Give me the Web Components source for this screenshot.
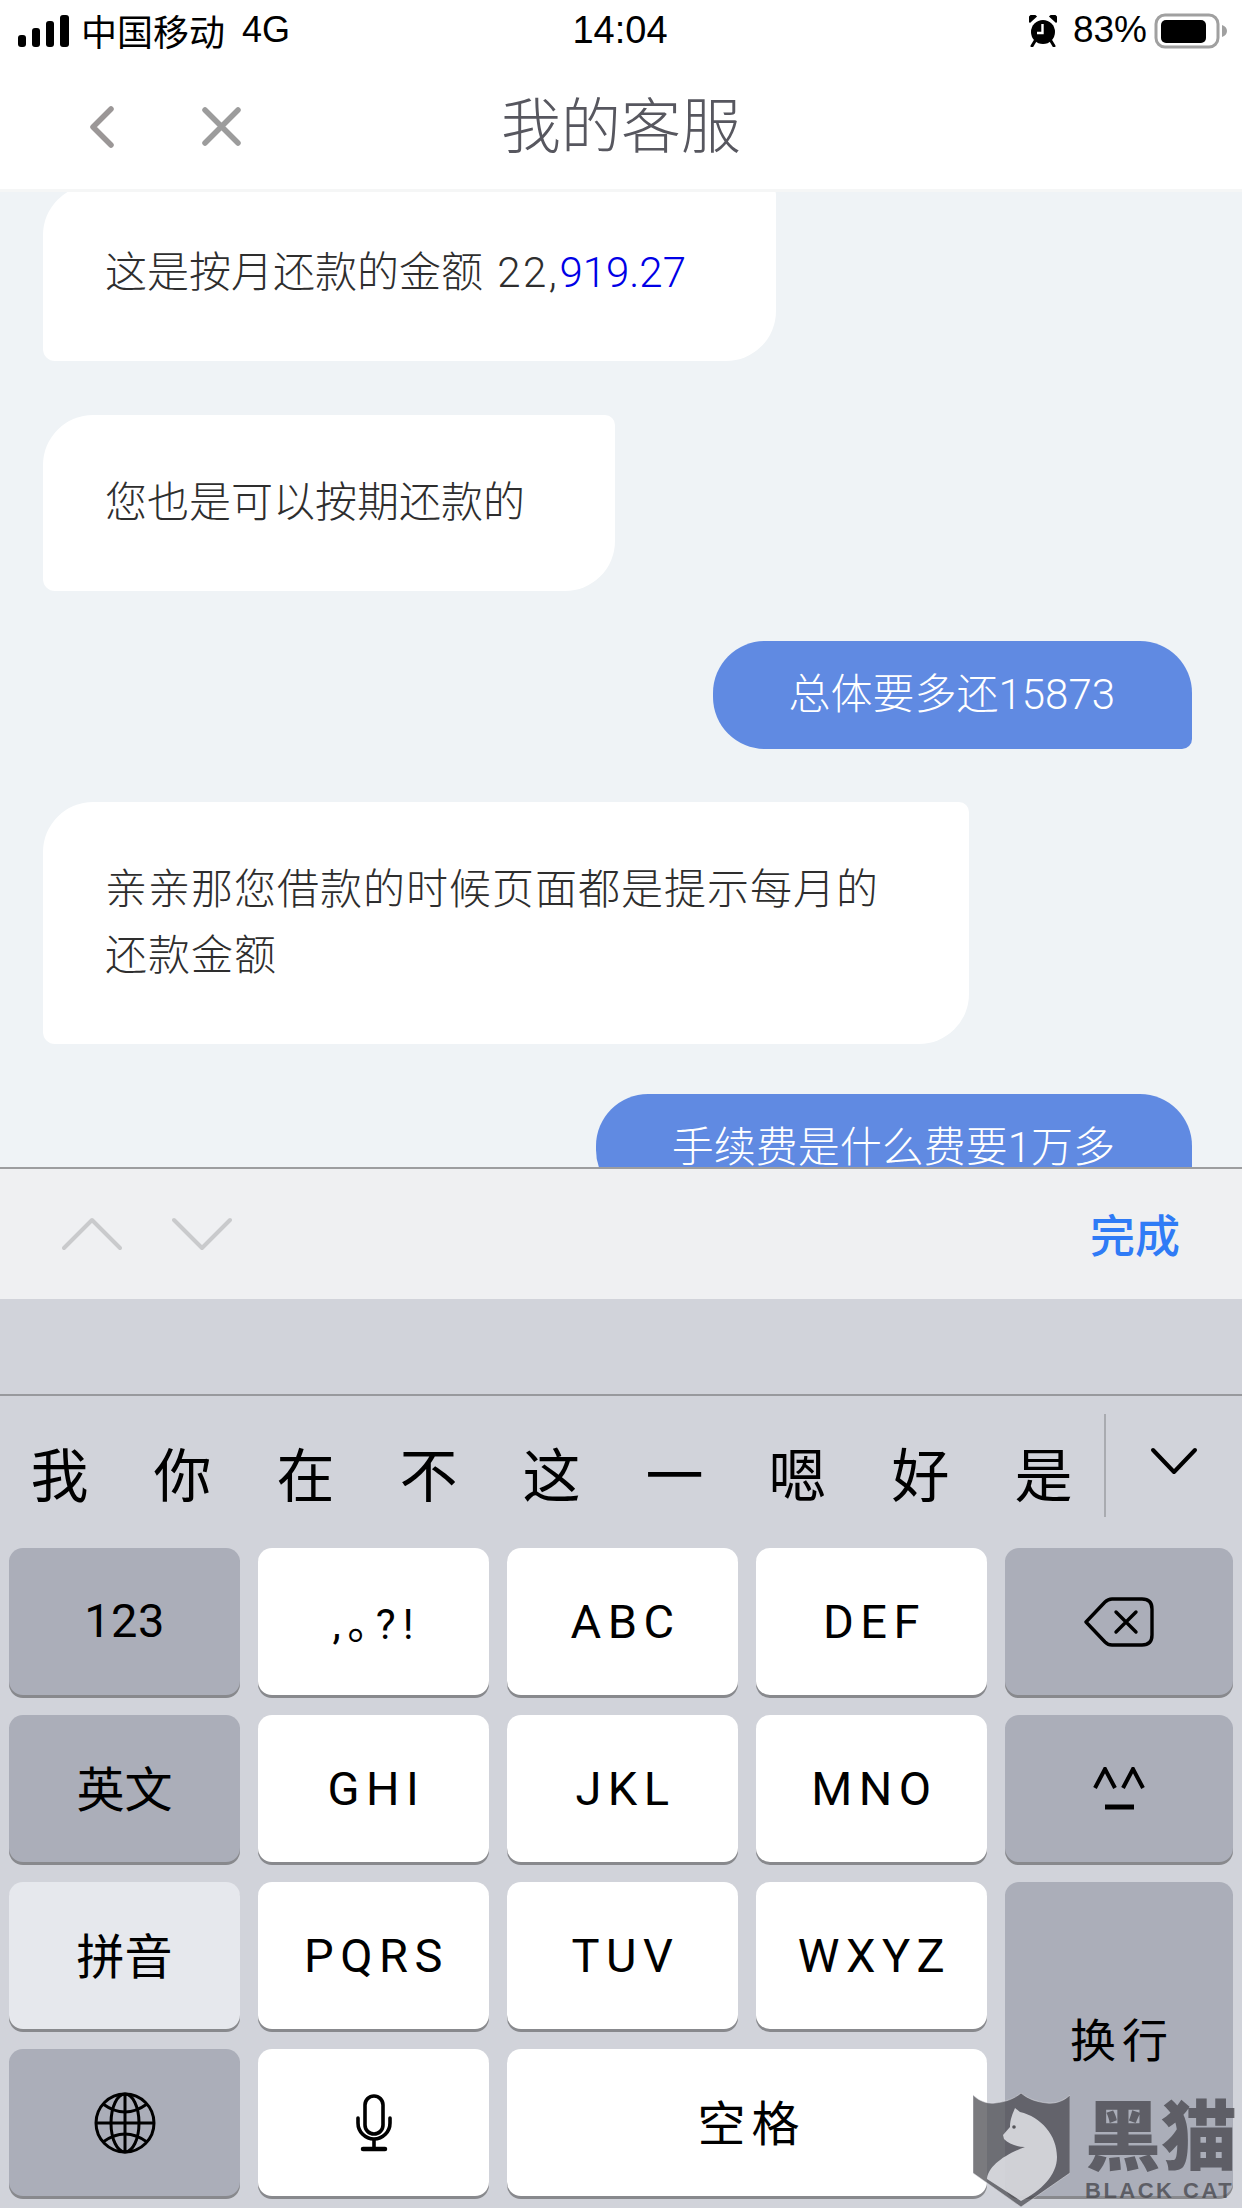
<!DOCTYPE html>
<html lang="zh">
<head>
<meta charset="utf-8">
<title>我的客服</title>
<style>
  html, body { margin: 0; padding: 0; }
  body {
    width: 1242px;
    height: 2208px;
    overflow: hidden;
    position: relative;
    background: #d1d3da;
    font-family: "Liberation Sans", "Noto Sans CJK SC", sans-serif;
    display: flex;
    flex-direction: column;
  }
</style>
</head>
<body>
  <status-bar></status-bar>
  <nav-bar>我的客服</nav-bar>
  <chat-view>
    <chat-bubble>这是按月还款的金额 <span style="letter-spacing:2.5px;margin-left:4px">22,</span><span style="color:#0000e6">919.27</span></chat-bubble>
    <chat-bubble>您也是可以按期还款的</chat-bubble>
    <chat-bubble side="me">总体要多还15873</chat-bubble>
    <chat-bubble><span style="letter-spacing:1px">亲亲那您借款的时候页面都是提示每月的<br>还款金额</span></chat-bubble>
    <chat-bubble side="me">手续费是什么费要1万多</chat-bubble>
  </chat-view>
  <form-toolbar></form-toolbar>
  <candidate-bar></candidate-bar>
  <key-pad></key-pad>
  <black-cat></black-cat>

<script>
class StatusBar extends HTMLElement {
  connectedCallback() {
    this.attachShadow({ mode: 'open' });
    this.shadowRoot.innerHTML = `
      <style>
        :host {
          display: grid;
          grid-template-columns: 1fr auto 1fr;
          align-items: center;
          height: 62px;
          background: #fff;
          color: #000;
          font-size: 37px;
          padding: 0 15px 0 18px;
          box-sizing: border-box;
        }
        .left, .right { display: flex; align-items: center; }
        .left { gap: 12px; font-size: 36px; }
        .right { justify-content: flex-end; }
        .net { margin-left: 5px; }
        .time { font-size: 38px; margin-top: -2px; margin-right: 5px; }
        svg { display: block; flex: none; }
        span { margin-top: -3px; }
        .pct { margin: -3px 7px 0 16px; }
      </style>
      <div class="left">
        <svg width="51" height="32" viewBox="0 0 51 32">
          <rect x="0" y="20" width="8" height="12" rx="3"/>
          <rect x="14" y="13" width="8" height="19" rx="3"/>
          <rect x="28" y="6" width="8" height="26" rx="3"/>
          <rect x="42" y="0" width="9" height="32" rx="3"/>
        </svg>
        <span>中国移动</span><span class="net">4G</span>
      </div>
      <div class="time">14:04</div>
      <div class="right">
        <svg width="28" height="32" viewBox="0 0 28 32">
          <circle cx="14" cy="17" r="12"/>
          <path d="M1 7 L7 1.5 A4 4 0 0 0 1 7Z M27 7 L21 1.5 A4 4 0 0 1 27 7Z" stroke="#000" stroke-width="1.5"/>
          <path d="M6 26 L3 31 M22 26 L25 31" stroke="#000" stroke-width="3" stroke-linecap="round"/>
          <path d="M13.5 9 V18 H8" fill="none" stroke="#fff" stroke-width="2.4"/>
        </svg>
        <span class="pct">83%</span>
        <svg width="73" height="36" viewBox="0 0 73 36">
          <rect x="2" y="2" width="62" height="32" rx="9" fill="none" stroke="#a0a0a0" stroke-width="3"/>
          <rect x="7" y="7" width="45" height="23" rx="5"/>
          <path d="M68 12 C71 13 73 15 73 18 C73 21 71 23 68 24Z" fill="#a0a0a0"/>
        </svg>
      </div>
    `;
  }
}

class NavBar extends HTMLElement {
  connectedCallback() {
    this.attachShadow({ mode: 'open' });
    this.shadowRoot.innerHTML = `
      <style>
        :host {
          display: grid;
          grid-template-columns: 1fr auto 1fr;
          align-items: center;
          height: 127px;
          background: #fff;
          box-sizing: border-box;
          padding-top: 2px;
        }
        .icons { display: flex; align-items: center; gap: 86px; padding-left: 86px; }
        svg { display: block; }
        h1 {
          margin: -10px 0 0;
          font-size: 60px;
          font-weight: 300;
          color: #57575f;
        }
      </style>
      <div class="icons">
        <svg width="30" height="44" viewBox="0 0 30 44" fill="none" stroke="#9b9797" stroke-width="5.5" stroke-linecap="round" stroke-linejoin="round">
          <path d="M25 4 L7 22 L25 40"/>
        </svg>
        <svg width="42" height="42" viewBox="0 0 42 42" fill="none" stroke="#9c9c9c" stroke-width="5.5" stroke-linecap="round">
          <path d="M3 4 L36 37 M36 4 L3 37"/>
        </svg>
      </div>
      <h1><slot></slot></h1>
      <div></div>
    `;
  }
}

class ChatView extends HTMLElement {
  connectedCallback() {
    this.attachShadow({ mode: 'open' });
    this.shadowRoot.innerHTML = `
      <style>
        :host {
          display: block;
          height: 978px;
          box-sizing: border-box;
          border-top: 3px solid #f5f6f6;
          background: #eff3f6;
          overflow: hidden;
        }
        .list {
          display: flex;
          flex-direction: column;
          margin-top: -7px;
          padding: 0 50px 0 43px;
        }
        ::slotted(:first-child) { margin-bottom: 54px; }
      </style>
      <div class="list"><slot></slot></div>
    `;
  }
}

class ChatBubble extends HTMLElement {
  connectedCallback() {
    this.attachShadow({ mode: 'open' });
    this.shadowRoot.innerHTML = `
      <style>
        :host {
          display: block;
          align-self: flex-start;
          font-family: Roboto, "Noto Sans CJK SC", sans-serif;
          font-size: 42px;
          line-height: 66px;
          font-weight: 300;
          color: #2e2e2e;
          background: #fff;
          padding: 55px 90px 55px 62px;
          border-radius: 50px 10px 50px 12px;
          margin-bottom: 50px;
        }
        :host([side="me"]) {
          align-self: flex-end;
          color: #fff;
          background: #608ae2;
          padding: 21px 77px 21px 76px;
          border-radius: 52px 52px 10px 52px;
          margin-bottom: 53px;
        }
      </style>
      <slot></slot>
    `;
  }
}

class FormToolbar extends HTMLElement {
  connectedCallback() {
    this.attachShadow({ mode: 'open' });
    this.shadowRoot.innerHTML = `
      <style>
        :host {
          display: flex;
          align-items: center;
          justify-content: space-between;
          height: 132px;
          box-sizing: border-box;
          border-top: 2px solid #9c9d9f;
          background: #eff0f2;
          padding: 0 62px 0 62px;
        }
        .arrows { display: flex; gap: 50px; }
        svg { display: block; }
        span { font-size: 45px; color: #2f7bf6; font-weight: 500; margin-top: -2px; }
      </style>
      <div class="arrows">
        <svg width="60" height="34" viewBox="0 0 60 34" fill="none" stroke="#c9cacc" stroke-width="4" stroke-linecap="round" stroke-linejoin="round">
          <path d="M2 31 L30 3 L58 31"/>
        </svg>
        <svg width="60" height="34" viewBox="0 0 60 34" fill="none" stroke="#c9cacc" stroke-width="4" stroke-linecap="round" stroke-linejoin="round">
          <path d="M2 3 L30 31 L58 3"/>
        </svg>
      </div>
      <span>完成</span>
    `;
  }
}

class CandidateBar extends HTMLElement {
  connectedCallback() {
    const words = ['我', '你', '在', '不', '这', '一', '嗯', '好', '是'];
    this.attachShadow({ mode: 'open' });
    this.shadowRoot.innerHTML = `
      <style>
        :host {
          display: flex;
          height: 154px;
          box-sizing: border-box;
          margin-top: 95px;
          border-top: 2px solid #98999d;
          color: #000;
        }
        .words {
          display: grid;
          grid-template-columns: repeat(9, 123px);
          align-items: center;
          justify-items: center;
          width: 1106px;
          margin-left: -2px;
          font-size: 58px;
          flex: none;
        }
        .sep { flex: none; width: 2px; height: 103px; margin-top: 18px; background: #a9abb0; }
        .more { flex: 1; display: flex; justify-content: center; padding-top: 51px; }
        svg { display: block; }
      </style>
      <div class="words">${words.map(w => `<span>${w}</span>`).join('')}</div>
      <div class="sep"></div>
      <div class="more">
        <svg width="48" height="28" viewBox="0 0 48 28" fill="none" stroke="#000" stroke-width="4" stroke-linecap="round" stroke-linejoin="round">
          <path d="M3 3 L24 25 L45 3"/>
        </svg>
      </div>
    `;
  }
}

class KbKey extends HTMLElement {
  connectedCallback() {
    this.attachShadow({ mode: 'open' });
    this.shadowRoot.innerHTML = `
      <style>
        :host {
          display: flex;
          align-items: center;
          justify-content: center;
          background: #fff;
          border-radius: 14px;
          box-shadow: 0 3px 0 #88898d;
          font-family: Roboto, "Noto Sans CJK SC", sans-serif;
          font-size: 47px;
          font-weight: 400;
          letter-spacing: 6.5px;
          padding-left: 6px;
          color: #000;
          white-space: nowrap;
        }
        :host([kind="dark"]) { background: #abaeb9; }
        :host([kind="light"]) { background: #e6e8ed; }
        :host([kind="tall"]) { background: #abaeb9; grid-row: span 2; }
        :host([kind="wide"]) { grid-column: span 2; }
        :host([cn]) { font-size: 48px; letter-spacing: 0; padding: 0 0 5px; }
      </style>
      <slot></slot>
    `;
  }
}

class KeyPad extends HTMLElement {
  connectedCallback() {
    this.attachShadow({ mode: 'open' });
    this.shadowRoot.innerHTML = `
      <style>
        :host {
          display: grid;
          grid-template-columns: repeat(4, 231px) 228px;
          grid-auto-rows: 147px;
          column-gap: 18px;
          row-gap: 20px;
          padding: 0 9px;
        }
        svg { display: block; }
      </style>
      <kb-key kind="dark" style="letter-spacing:.5px;padding:0 0 2px">123</kb-key>
      <kb-key style="font-size:42px;letter-spacing:7px;padding:0 0 2px 6px">,｡?!</kb-key>
      <kb-key>ABC</kb-key>
      <kb-key>DEF</kb-key>
      <kb-key kind="dark" style="padding:0">
        <svg width="70" height="50" viewBox="0 0 70 50" fill="none" stroke="#000" stroke-width="3.4" stroke-linecap="round" stroke-linejoin="round">
          <path d="M2 25 L21 5 Q24 2 28 2 H58 Q68 2 68 12 V38 Q68 48 58 48 H28 Q24 48 21 45Z"/>
          <path d="M32 15 L52 35 M52 15 L32 35"/>
        </svg>
      </kb-key>

      <kb-key kind="dark" cn>英文</kb-key>
      <kb-key>GHI</kb-key>
      <kb-key>JKL</kb-key>
      <kb-key>MNO</kb-key>
      <kb-key kind="dark" style="padding:0">
        <svg width="52" height="44" viewBox="0 0 52 44" fill="none" stroke="#000">
          <path d="M2 21 L12 2 L22 21 M30 21 L40 2 L50 21" stroke-width="4"/>
          <path d="M12 40 H41" stroke-width="5"/>
        </svg>
      </kb-key>

      <kb-key kind="light" cn>拼音</kb-key>
      <kb-key>PQRS</kb-key>
      <kb-key>TUV</kb-key>
      <kb-key>WXYZ</kb-key>
      <kb-key kind="tall" cn style="letter-spacing:6px;font-size:46px;padding-left:6px">换行</kb-key>

      <kb-key kind="dark" style="padding:0">
        <svg width="62" height="62" viewBox="0 0 62 62" fill="none" stroke="#000" stroke-width="3">
          <circle cx="31" cy="31" r="29"/>
          <ellipse cx="31" cy="31" rx="14" ry="29"/>
          <path d="M31 2 V60 M2 31 H60"/>
          <path d="M9 12 Q31 28 53 12 M9 50 Q31 34 53 50"/>
        </svg>
      </kb-key>
      <kb-key style="padding:0">
        <svg width="38" height="58" viewBox="0 0 38 58" fill="none" stroke="#000" stroke-width="3.6" stroke-linecap="round">
          <rect x="10" y="2" width="18" height="38" rx="9"/>
          <path d="M3 24 V29 A16 16 0 0 0 35 29 V24"/>
          <path d="M19 46 V54"/>
          <path d="M8 55 H30" stroke-width="4.5"/>
        </svg>
      </kb-key>
      <kb-key kind="wide" cn style="letter-spacing:6px;padding-left:9px">空格</kb-key>
    `;
  }
}

class BlackCat extends HTMLElement {
  connectedCallback() {
    this.attachShadow({ mode: 'open' });
    this.shadowRoot.innerHTML = `
      <style>
        :host {
          position: absolute;
          left: 973px;
          top: 2093px;
          width: 269px;
          height: 115px;
          display: flex;
          overflow: hidden;
          color: rgba(72, 72, 78, .78);
        }
        svg { display: block; flex: none; }
        .text { margin-left: 15px; display: flex; flex-direction: column; align-items: flex-start; }
        .cn { font-size: 76px; line-height: 76px; font-weight: 900; margin-top: 7px; white-space: nowrap; }
        .en { font-size: 22px; line-height: 24px; font-weight: 700; letter-spacing: 2.5px; margin-top: 3px; white-space: nowrap; }
      </style>
      <svg width="97" height="115" viewBox="0 0 97 115">
        <path d="M0 2 C6 8 14 11 22 10 C32 9 41 6 48 0 C55 6 64 9 74 10 C82 11 91 8 97 2 V80 L48 114 L0 80Z" fill="rgba(70,70,76,.72)" stroke="rgba(230,230,235,.5)" stroke-width="1"/>
        <path d="M42 15 L47 19 C68 24 84 42 84 64 C84 82 68 98 48 108 L14 86 C15 74 30 62 52 54 C44 54 36 51 31 46 L30 42 L37 34 C37 26 40 20 42 15Z" fill="rgba(232,233,238,.82)"/>
        <circle cx="41" cy="34" r="1.8" fill="#55555a"/>
      </svg>
      <div class="text">
        <div class="cn">黑猫</div>
        <div class="en">BLACK CAT</div>
      </div>
    `;
  }
}

customElements.define('status-bar', StatusBar);
customElements.define('nav-bar', NavBar);
customElements.define('chat-view', ChatView);
customElements.define('chat-bubble', ChatBubble);
customElements.define('form-toolbar', FormToolbar);
customElements.define('candidate-bar', CandidateBar);
customElements.define('kb-key', KbKey);
customElements.define('key-pad', KeyPad);
customElements.define('black-cat', BlackCat);
</script>
</body>
</html>
